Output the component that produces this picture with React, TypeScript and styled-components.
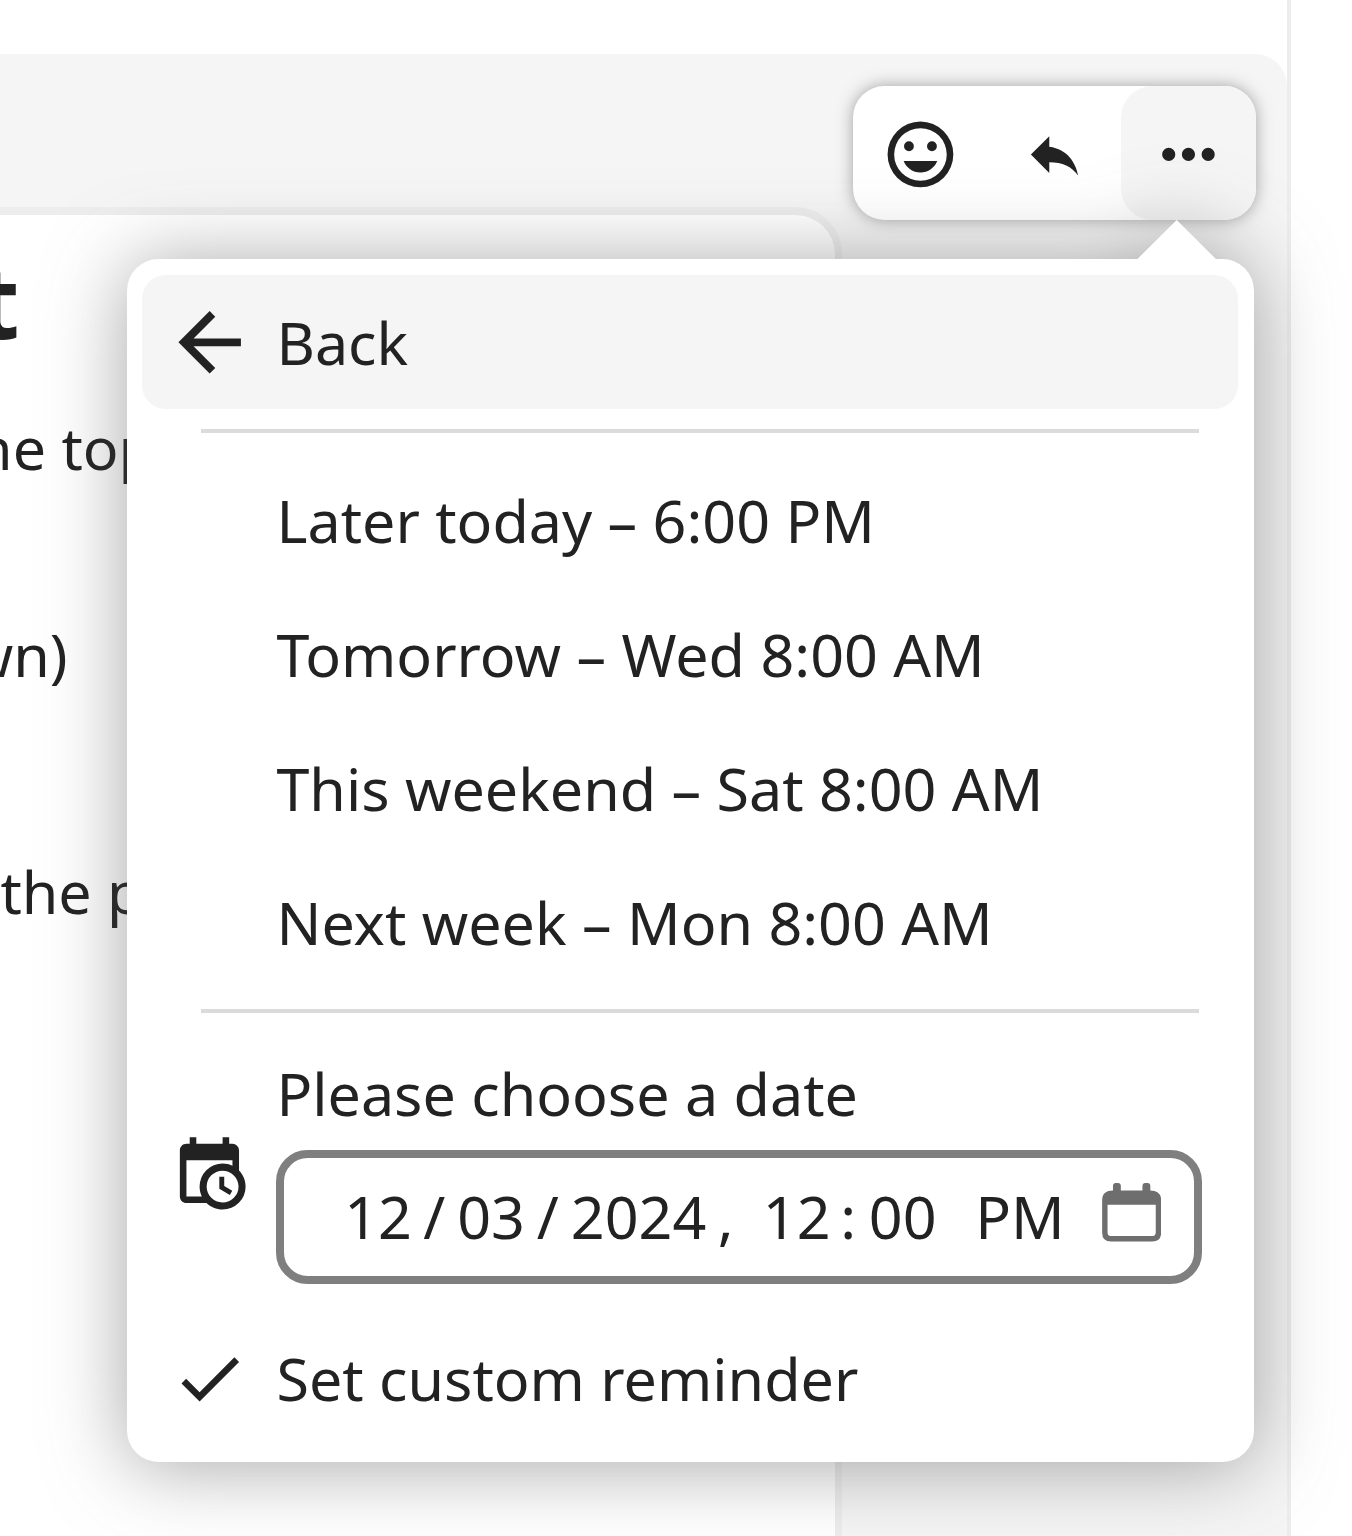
import React from "react";
import styled, { createGlobalStyle } from "styled-components";

const Global = createGlobalStyle`
  * { box-sizing: border-box; }
  html, body { margin: 0; background: #fff; overflow: hidden; }
  body { font-family: "Noto Sans", sans-serif; font-size: 59.2px; color: #222; }
`;

const Screen = styled.div`
  position: relative;
  display: flex;
  width: 1352px;
  height: 1536px;
  overflow: hidden;
`;

const Chat = styled.main`
  width: 1287px;
  padding-top: 54px;
`;

const Sidebar = styled.aside`
  flex: 1;
  border-left: 4px solid #ededed;
`;

const Message = styled.article`
  height: 1482px;
  padding-top: 153px;
  background: #f5f5f5;
  border-top-right-radius: 32px;
`;

const Card = styled.section`
  display: flex;
  flex-direction: column;
  width: 842px;
  height: 1400px;
  border-top: 8px solid #ededed;
  border-right: 7.5px solid #ededed;
  border-top-right-radius: 47px;
  background: #fff;
  overflow: hidden;
`;

const Line = styled.p<{ $top: number; $right: number; $size?: number; $bold?: boolean }>`
  flex: none;
  display: flex;
  justify-content: flex-end;
  width: ${(p) => p.$right}px;
  margin: ${(p) => p.$top}px 0 0;
  font-size: ${(p) => p.$size ?? 59.2}px;
  font-weight: ${(p) => (p.$bold ? 700 : 400)};
  line-height: 90px;
  white-space: nowrap;
`;

const Toolbar = styled.div`
  position: absolute;
  left: 853px;
  top: 86px;
  display: flex;
  width: 402.5px;
  height: 134px;
  border-radius: 31.5px;
  background: #fff;
  box-shadow: 0 0 15.8px rgba(77, 77, 77, 0.5);
`;

const ToolButton = styled.button<{ $active?: boolean }>`
  flex: 1;
  display: grid;
  place-items: center;
  padding: 2.4px 0 0;
  border: 0;
  border-radius: 31.5px;
  background: ${(p) => (p.$active ? "#f5f5f5" : "transparent")};
  color: inherit;
`;

const PopoverLayer = styled.div`
  position: absolute;
  left: 126.5px;
  top: 220px;
  width: 1127.5px;
  filter: drop-shadow(0 4px 39.45px rgba(77, 77, 77, 0.5));
`;

const Arrow = styled.div`
  width: 79px;
  height: 39.3px;
  margin-left: 1010.7px;
  background: #fff;
  clip-path: polygon(50% 0, 100% 100%, 0 100%);
`;

const Menu = styled.div`
  height: 1202.3px;
  padding: 15.8px;
  border-radius: 31.5px;
  background: #fff;
`;

const Item = styled.div<{ $active?: boolean }>`
  display: flex;
  align-items: center;
  height: 134.15px;
  border-radius: 23.7px;
  background: ${(p) => (p.$active ? "#f5f5f5" : "transparent")};
  line-height: 134px;
  white-space: nowrap;
`;

const IconCell = styled.span`
  display: grid;
  place-items: center;
  flex: none;
  width: 134.15px;
  height: 100%;
`;

const Separator = styled.hr`
  height: 4px;
  margin: 19.7px 39.5px 19.7px 59px;
  border: 0;
  background: #dbdbdb;
`;

const DateRow = styled.div`
  display: flex;
  height: 276px;
  margin-top: 22.3px;
`;

const DateField = styled.label`
  display: flex;
  flex-direction: column;
  width: 926px;
`;

const DateLabel = styled.span`
  height: 114.7px;
  line-height: 117px;
`;

const DateInput = styled.div`
  display: flex;
  align-items: center;
  height: 134.2px;
  padding-left: 59.7px;
  border: 8px solid #7f7f7f;
  border-radius: 31.5px;
  line-height: 116px;
  white-space: pre;
`;

const Part = styled.span<{ $w: number }>`
  flex: none;
  width: ${(p) => p.$w}px;
  padding-bottom: 2px;
`;

const Svg = styled.svg`
  display: block;
  fill: currentColor;
`;

const PickerSvg = styled(Svg)`
  margin-bottom: 8px;
  color: #6e6e6e;
`;

function Icon({ d, size = 78.9 }: { d: string; size?: number }) {
  return (
    <Svg width={size} height={size} viewBox="0 0 24 24">
      <path fillRule="evenodd" d={d} />
    </Svg>
  );
}

const icons = {
  smile:
    "M12,17.5C14.33,17.5 16.3,16.04 17.11,14H6.89C7.69,16.04 9.67,17.5 12,17.5M8.5,11A1.5,1.5 0 0,0 10,9.5A1.5,1.5 0 0,0 8.5,8A1.5,1.5 0 0,0 7,9.5A1.5,1.5 0 0,0 8.5,11M15.5,11A1.5,1.5 0 0,0 17,9.5A1.5,1.5 0 0,0 15.5,8A1.5,1.5 0 0,0 14,9.5A1.5,1.5 0 0,0 15.5,11M12,20A8,8 0 0,1 4,12A8,8 0 0,1 12,4A8,8 0 0,1 20,12A8,8 0 0,1 12,20M12,2A10,10 0 0,0 2,12A10,10 0 0,0 12,22A10,10 0 0,0 22,12A10,10 0 0,0 12,2Z",
  reply: "M10,9V5L3,12L10,19V14.9C15,14.9 18.5,16.5 21,20C20,15 17,10 10,9Z",
  dots: "M16,12A2,2 0 0,1 18,10A2,2 0 0,1 20,12A2,2 0 0,1 18,14A2,2 0 0,1 16,12M10,12A2,2 0 0,1 12,10A2,2 0 0,1 14,12A2,2 0 0,1 12,14A2,2 0 0,1 10,12M4,12A2,2 0 0,1 6,10A2,2 0 0,1 8,12A2,2 0 0,1 6,14A2,2 0 0,1 4,12Z",
  back: "M20,11V13H8L13.5,18.5L12.08,19.92L4.16,12L12.08,4.08L13.5,5.5L8,11H20Z",
  check: "M21,7L9,19L3.5,13.5L4.91,12.09L9,16.17L19.59,5.59L21,7Z",
  calendarClock:
    "M15,13H16.5V15.82L18.94,17.23L18.19,18.53L15,16.69V13M19,8H5V19H9.67C9.24,18.09 9,17.07 9,16A7,7 0 0,1 16,9C17.07,9 18.09,9.24 19,9.67V8M5,21C3.89,21 3,20.1 3,19V5C3,3.89 3.89,3 5,3H6V1H8V3H16V1H18V3H19A2,2 0 0,1 21,5V11.1C22.24,12.36 23,14.09 23,16A7,7 0 0,1 16,23C14.09,23 12.36,22.24 11.1,21H5M16,11.15A4.85,4.85 0 0,0 11.15,16C11.15,18.68 13.32,20.85 16,20.85A4.85,4.85 0 0,0 20.85,16C20.85,13.32 18.68,11.15 16,11.15Z",
};

const presets = [
  "Later today – 6:00 PM",
  "Tomorrow – Wed 8:00 AM",
  "This weekend – Sat 8:00 AM",
  "Next week – Mon 8:00 AM",
];

export default function App() {
  return (
    <Screen>
      <Global />
      <Chat>
        <Message>
          <Card>
            <Line $top={40} $right={19.7} $size={101} $bold>t</Line>
            <Line $top={57} $right={155}>the top</Line>
            <Line $top={117} $right={67.5}>down)</Line>
            <Line $top={147} $right={143.5}>the p</Line>
          </Card>
        </Message>
      </Chat>
      <Sidebar />
      <Toolbar>
        <ToolButton aria-label="React"><Icon d={icons.smile} /></ToolButton>
        <ToolButton aria-label="Reply"><Icon d={icons.reply} size={63.1} /></ToolButton>
        <ToolButton aria-label="More" $active><Icon d={icons.dots} /></ToolButton>
      </Toolbar>
      <PopoverLayer>
        <Arrow />
        <Menu>
          <Item $active>
            <IconCell><Icon d={icons.back} size={94.7} /></IconCell>
            Back
          </Item>
          <Separator />
          {presets.map((p) => (
            <Item key={p}><IconCell />{p}</Item>
          ))}
          <Separator />
          <DateRow>
            <IconCell><Icon d={icons.calendarClock} /></IconCell>
            <DateField>
              <DateLabel>Please choose a date</DateLabel>
              <DateInput>
                <Part $w={79}>12</Part>
                <Part $w={34}>/</Part>
                <Part $w={79.7}>03</Part>
                <Part $w={34}>/</Part>
                <Part $w={147}>2024</Part>
                <Part $w={45}>,</Part>
                <Part $w={77.4}>12</Part>
                <Part $w={28.6}>:</Part>
                <Part $w={106.4}>00</Part>
                <Part $w={126.9}>PM</Part>
                <PickerSvg width="59.3" height="59" viewBox="0 0 60 60">
                  <path fillRule="evenodd" d="M11 7.5V3q0-3 3-3h2q3 0 3 3v4.500H41V3q0-3 3-3h2q3 0 3 3v4.500q11 0 11 10V50.500q0 9-9 9H9q-9 0-9-9V17.500q0-10 11-10zM5.500 22V50q0 4 4 4H50.500q4 0 4-4V22z" />
                </PickerSvg>
              </DateInput>
            </DateField>
          </DateRow>
          <Item>
            <IconCell><Icon d={icons.check} /></IconCell>
            Set custom reminder
          </Item>
        </Menu>
      </PopoverLayer>
    </Screen>
  );
}
